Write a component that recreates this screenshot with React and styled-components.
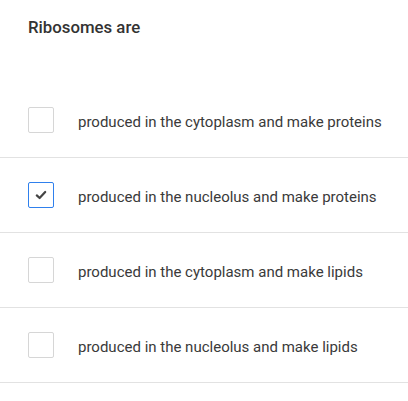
import React, { useState } from "react";
import styled, { createGlobalStyle } from "styled-components";

const Global = createGlobalStyle`
  html, body { margin: 0; padding: 0; background: #fff; }
  body { font-family: Roboto, "Noto Sans", sans-serif; color: #333; }
`;

const Wrap = styled.div`
  width: 408px;
  display: flex;
  flex-direction: column;
`;

const Title = styled.h2`
  margin: 0;
  padding: 17px 28px 0;
  height: 83px;
  box-sizing: border-box;
  font-size: 16.8px;
  font-weight: 500;
  line-height: 20px;
  color: #333;
`;

const List = styled.div`
  display: flex;
  flex-direction: column;
`;

const Row = styled.label`
  display: flex;
  align-items: center;
  gap: 24px;
  height: 75px;
  box-sizing: border-box;
  padding: 0 0 0 28px;
  border-bottom: 1px solid #e2e2e2;
  cursor: pointer;
`;

const Box = styled.span`
  width: 26px;
  height: 26px;
  box-sizing: border-box;
  border: 1px solid ${(p) => (p.$checked ? "#2f80ed" : "#d6d6d6")};
  border-radius: 2px;
  display: flex;
  align-items: center;
  justify-content: center;
  flex-shrink: 0;
  background: #fff;
`;

const Text = styled.span`
  font-size: 15px;
  color: #3a3a3a;
  line-height: 20px;
  padding-top: 3px;
  white-space: nowrap;
`;

const options = [
  "produced in the cytoplasm and make proteins",
  "produced in the nucleolus and make proteins",
  "produced in the cytoplasm and make lipids",
  "produced in the nucleolus and make lipids",
];

export default function App() {
  const [sel, setSel] = useState(1);
  return (
    <Wrap>
      <Global />
      <Title>Ribosomes are</Title>
      <List>
        {options.map((o, i) => (
          <Row key={i} onClick={() => setSel(i)}>
            <Box $checked={sel === i}>
              {sel === i && (
                <svg width="12" height="10" viewBox="0 0 12 10">
                  <path d="M1.8 5.4 L4.6 8 L10.2 2" fill="none" stroke="#444" strokeWidth="2.2" strokeLinecap="round" strokeLinejoin="round" />
                </svg>
              )}
            </Box>
            <Text>{o}</Text>
          </Row>
        ))}
      </List>
    </Wrap>
  );
}
